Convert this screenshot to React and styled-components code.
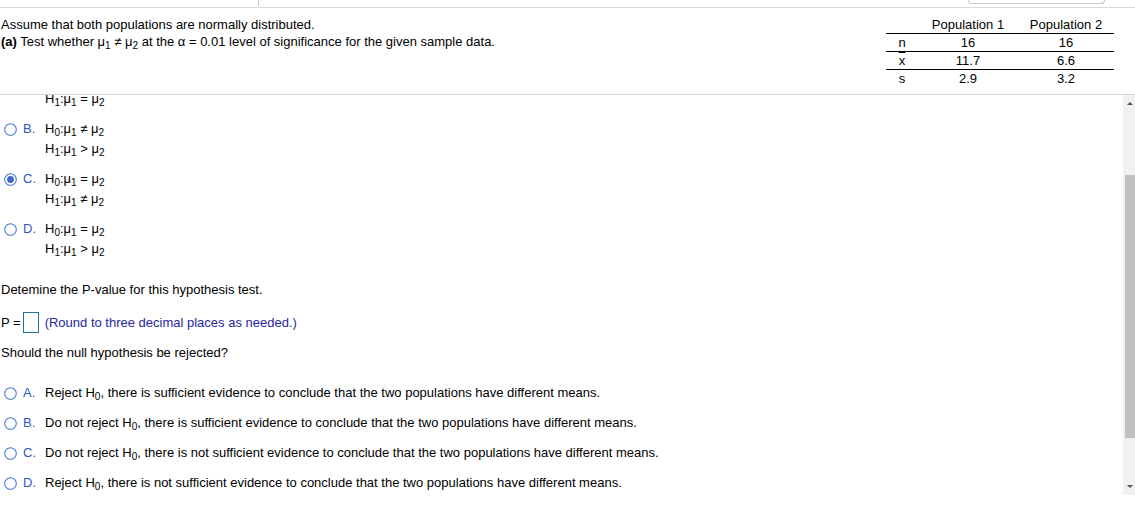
import React, { useLayoutEffect, useRef } from "react";
import styled, { createGlobalStyle } from "styled-components";

const GlobalStyle = createGlobalStyle`
  html, body {
    margin: 0;
    padding: 0;
    background: #fff;
  }
  body {
    font-family: "Liberation Sans", Arial, sans-serif;
    font-size: 13px;
    color: #000;
  }
`;

const Page = styled.div`
  width: 1135px;
  height: 509px;
  display: flex;
  flex-direction: column;
  overflow: hidden;
`;

const TopStrip = styled.div`
  height: 7px;
  border-bottom: 1px solid #d5d9e1;
  display: flex;
  align-items: flex-start;
`;

const Splitter = styled.div`
  margin-left: 258px;
  width: 1px;
  height: 6px;
  background: #c3cad8;
`;

const TabStub = styled.div`
  margin-left: auto;
  margin-right: 30px;
  width: 135px;
  height: 3px;
  border: 1px solid #c8c8c8;
  border-top: none;
  border-radius: 0 0 5px 5px;
`;

const Header = styled.div`
  box-sizing: border-box;
  height: 87px;
  border-bottom: 1px solid #cdd4df;
  display: flex;
  justify-content: space-between;
  align-items: flex-start;
  padding: 8px 21px 0 1px;
`;

const Intro = styled.div`
  line-height: 17px;
`;

const Sub = styled.sub`
  font-size: 10px;
  line-height: 0;
  vertical-align: -3px;
`;

const DataTable = styled.table`
  border-collapse: collapse;
  width: 228px;
`;

const Row = styled.tr`
  border-bottom: ${(p) => (p.$last ? "none" : "1px solid #000")};
`;

const Cell = styled.td`
  width: ${(p) => p.$w}px;
  height: 17px;
  line-height: 17px;
  padding: 0;
  text-align: center;
`;

const XBar = styled.span`
  text-decoration: overline;
`;

const Body = styled.div`
  height: 400px;
  display: flex;
`;

const ScrollArea = styled.div`
  flex: 1;
  overflow: hidden;
`;

const Content = styled.div`
  padding-bottom: 30px;
`;

const Continuation = styled.div`
  padding-left: 45px;
  line-height: 20px;
`;

const OptionList = styled.div`
  display: flex;
  flex-direction: column;
  gap: 10px;
  margin-top: ${(p) => p.$mt || 0}px;
`;

const Option = styled.div`
  display: flex;
  align-items: flex-start;
  line-height: 20px;
`;

const RadioWrap = styled.span`
  width: 13px;
  height: 20px;
  margin-left: 4px;
  display: flex;
  align-items: center;
`;

const Letter = styled.span`
  width: 22px;
  margin-left: 6px;
  color: #2f55cf;
`;

const Prompt = styled.p`
  margin: ${(p) => p.$mt}px 0 0 1px;
  line-height: 17px;
`;

const AnswerRow = styled.div`
  display: flex;
  align-items: center;
  height: 21px;
  margin: 14px 0 0 1px;
`;

const AnswerBox = styled.span`
  width: 14px;
  height: 19px;
  border: 1px solid #1f7394;
  margin: 0 6px 0 2px;
`;

const Hint = styled.span`
  color: #27279e;
`;

const Scrollbar = styled.div`
  width: 12px;
  background: #f1f1f1;
  display: flex;
  flex-direction: column;
`;

const ArrowBtn = styled.div`
  height: 17px;
  display: flex;
  align-items: center;
  justify-content: center;
  padding-left: 2px;
  &::after {
    content: "";
    border-left: 3px solid transparent;
    border-right: 3px solid transparent;
    ${(p) =>
      p.$dir === "up"
        ? "border-bottom: 3px solid #505050;"
        : "border-top: 3px solid #505050;"}
  }
`;

const Track = styled.div`
  flex: 1;
  padding-top: 63px;
`;

const Thumb = styled.div`
  height: 263px;
  margin-left: 2px;
  background: #c1c1c1;
`;

const Radio = ({ checked }) => (
  <svg width="13" height="13" viewBox="0 0 13 13">
    <circle cx="6.5" cy="6.5" r="5.8" fill="#fff" stroke="#4a78d6" strokeWidth="1.1" />
    {checked && <circle cx="6.5" cy="6.5" r="3.4" fill="#3d67cf" />}
  </svg>
);

const Hyp = ({ h, rel }) => (
  <div>
    H<Sub>{h}</Sub>:μ<Sub>1</Sub> {rel} μ<Sub>2</Sub>
  </div>
);

const hypotheses = [
  { key: "B", h0: "≠", h1: ">" },
  { key: "C", h0: "=", h1: "≠", checked: true },
  { key: "D", h0: "=", h1: ">" },
];

const decisions = [
  { key: "A", verb: "Reject", evidence: "there is sufficient evidence" },
  { key: "B", verb: "Do not reject", evidence: "there is sufficient evidence" },
  { key: "C", verb: "Do not reject", evidence: "there is not sufficient evidence" },
  { key: "D", verb: "Reject", evidence: "there is not sufficient evidence" },
];

export default function App() {
  const scrollRef = useRef(null);

  // the reference shows the answer pane scrolled a few pixels down
  useLayoutEffect(() => {
    if (scrollRef.current) scrollRef.current.scrollTop = 6;
  }, []);

  return (
    <Page>
      <GlobalStyle />
      <TopStrip>
        <Splitter />
        <TabStub />
      </TopStrip>
      <Header>
        <Intro>
          <div>Assume that both populations are normally distributed.</div>
          <div>
            <b>(a)</b> Test whether μ<Sub>1</Sub> ≠ μ<Sub>2</Sub> at the α = 0.01 level of
            significance for the given sample data.
          </div>
        </Intro>
        <DataTable>
          <tbody>
            <Row>
              <Cell $w={32} />
              <Cell $w={100}>Population 1</Cell>
              <Cell $w={96}>Population 2</Cell>
            </Row>
            <Row>
              <Cell>n</Cell>
              <Cell>16</Cell>
              <Cell>16</Cell>
            </Row>
            <Row>
              <Cell>
                <XBar>x</XBar>
              </Cell>
              <Cell>11.7</Cell>
              <Cell>6.6</Cell>
            </Row>
            <Row $last>
              <Cell>s</Cell>
              <Cell>2.9</Cell>
              <Cell>3.2</Cell>
            </Row>
          </tbody>
        </DataTable>
      </Header>
      <Body>
        <ScrollArea ref={scrollRef}>
          <Content>
            <Continuation>
              <Hyp h="1" rel="=" />
            </Continuation>
            <OptionList $mt={10}>
              {hypotheses.map((o) => (
                <Option key={o.key}>
                  <RadioWrap>
                    <Radio checked={o.checked} />
                  </RadioWrap>
                  <Letter>{o.key}.</Letter>
                  <div>
                    <Hyp h="0" rel={o.h0} />
                    <Hyp h="1" rel={o.h1} />
                  </div>
                </Option>
              ))}
            </OptionList>
            <Prompt $mt={22}>Detemine the P-value for this hypothesis test.</Prompt>
            <AnswerRow>
              P =<AnswerBox />
              <Hint>(Round to three decimal places as needed.)</Hint>
            </AnswerRow>
            <Prompt $mt={11}>Should the null hypothesis be rejected?</Prompt>
            <OptionList $mt={22}>
              {decisions.map((d) => (
                <Option key={d.key}>
                  <RadioWrap>
                    <Radio />
                  </RadioWrap>
                  <Letter>{d.key}.</Letter>
                  <div>
                    {d.verb} H<Sub>0</Sub>, {d.evidence} to conclude that the two populations
                    have different means.
                  </div>
                </Option>
              ))}
            </OptionList>
          </Content>
        </ScrollArea>
        <Scrollbar>
          <ArrowBtn $dir="up" />
          <Track>
            <Thumb />
          </Track>
          <ArrowBtn $dir="down" />
        </Scrollbar>
      </Body>
    </Page>
  );
}
